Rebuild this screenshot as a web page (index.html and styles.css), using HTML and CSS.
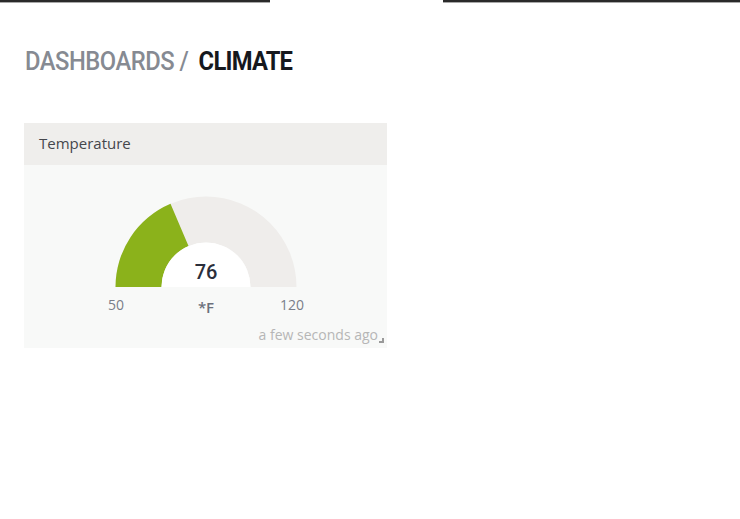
FILE: index.html
```html
<!DOCTYPE html>
<html>
<head>
<meta charset="utf-8">
<link rel="stylesheet" href="styles.css">
</head>
<body>
<div class="topbar">
  <div class="line line-left"></div>
  <div class="line-gap"></div>
  <div class="line line-right"></div>
</div>
<h1 class="crumbs"><span class="crumb-parent">DASHBOARDS /</span> <span class="crumb-current">CLIMATE</span></h1>
<div class="card">
  <div class="card-header">Temperature</div>
  <div class="card-body">
    <svg class="gauge" width="363" height="160" viewBox="0 0 363 160">
      <path d="M 91.5 122 A 90.5 90.5 0 0 1 272.5 122 L 226.5 122 A 44.5 44.5 0 0 0 137.5 122 Z" fill="#efedeb"/>
      <path d="M 91.5 122 A 90.5 90.5 0 0 1 146.5 38.8 L 164.5 81.1 A 44.5 44.5 0 0 0 137.5 122 Z" fill="#8bb21b"/>
      <path d="M 137.5 122 A 44.5 44.5 0 0 1 226.5 122 Z" fill="#ffffff"/>
      <text class="g-value" x="182" y="114" text-anchor="middle">76</text>
      <text class="g-limit" x="92" y="145" text-anchor="middle">50</text>
      <text class="g-limit" x="268" y="145" text-anchor="middle">120</text>
      <text class="g-unit" x="182" y="148" text-anchor="middle">*F</text>
    </svg>
    <div class="card-footer">a few seconds ago</div>
    <span class="resize-handle"></span>
  </div>
</div>
</body>
</html>
```
FILE: styles.css
```css
html, body {
  margin: 0;
  padding: 0;
  background: #ffffff;
}
body {
  width: 740px;
  height: 519px;
  overflow: hidden;
  font-family: "Open Sans", "Liberation Sans", sans-serif;
}
.topbar {
  display: flex;
  height: 3px;
}
.line {
  height: 2px;
  background: #2a2a2a;
  border-bottom: 1px solid #a8a8a8;
}
.line-left { width: 270px; }
.line-gap { width: 173px; }
.line-right { flex: 1; }

.crumbs {
  margin: 44px 0 0 25px;
  font-family: Roboto, "Liberation Sans", sans-serif;
  font-size: 25px;
  line-height: 30px;
  letter-spacing: -0.5px;
  display: inline-block;
  transform: scaleX(0.95);
  transform-origin: left center;
  white-space: nowrap;
}
.crumb-parent { color: #868a92; font-weight: 500; }
.crumb-current { color: #16181d; font-weight: 700; margin-left: 5px; letter-spacing: -0.8px; }

.card {
  position: relative;
  margin: 46px 0 0 24px;
  width: 363px;
}
.card-header {
  height: 42px;
  box-sizing: border-box;
  padding: 10px 0 0 15px;
  background: #efeeec;
  color: #45474c;
  font-size: 15px;
  line-height: 20px;
}
.card-body {
  height: 183px;
  background: #f8f9f8;
  position: relative;
}
.gauge {
  display: block;
}
.g-value {
  font-family: Roboto, "Liberation Sans", sans-serif;
  font-size: 20px;
  font-weight: 500;
  fill: #2b2f3b;
}
.g-limit {
  font-family: "Open Sans", sans-serif;
  font-size: 14px;
  fill: #7a7e89;
}
.g-unit {
  font-family: "Open Sans", sans-serif;
  font-size: 15px;
  font-weight: 600;
  fill: #6c707b;
}
.card-footer {
  position: absolute;
  right: 9px;
  top: 161px;
  font-size: 14px;
  line-height: 17px;
  color: #b6b6b6;
}
.resize-handle {
  position: absolute;
  right: 3px;
  bottom: 5px;
  width: 5px;
  height: 5px;
  border-right: 2px solid #9a9a9a;
  border-bottom: 2px solid #9a9a9a;
  box-sizing: border-box;
}
```
